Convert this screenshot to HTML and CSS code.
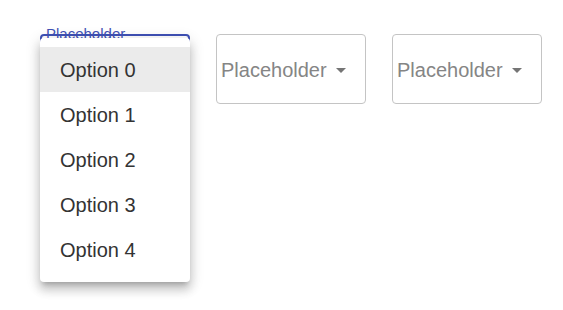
FILE: index.html
```html
<!DOCTYPE html>
<html>
<head>
<meta charset="utf-8">
<link rel="stylesheet" href="styles.css">
</head>
<body>
<div class="row">
  <div class="select focused">
    <span class="label">Placeholder</span>
    <ul class="menu">
      <li class="option active">Option 0</li>
      <li class="option">Option 1</li>
      <li class="option">Option 2</li>
      <li class="option">Option 3</li>
      <li class="option">Option 4</li>
    </ul>
  </div>
  <div class="select">
    <span class="placeholder">Placeholder</span>
    <span class="arrow"></span>
  </div>
  <div class="select">
    <span class="placeholder">Placeholder</span>
    <span class="arrow"></span>
  </div>
</div>
</body>
</html>
```
FILE: styles.css
```css
html, body {
  margin: 0;
  padding: 0;
  background: #ffffff;
  font-family: "Liberation Sans", Arial, sans-serif;
}
body {
  min-height: 310px;
}
.row {
  display: flex;
  gap: 26px;
  padding: 34px 0 0 40px;
  min-height: 276px;
}
.select {
  position: relative;
  box-sizing: border-box;
  width: 150px;
  height: 70px;
  border: 1px solid #c4c4c4;
  border-radius: 4px;
  display: flex;
  align-items: center;
  padding-left: 4px;
}
.select.focused {
  border: 2px solid #3f51b5;
}
.placeholder {
  font-size: 20px;
  color: #858585;
  line-height: 1;
  margin-top: 2px;
}
.arrow {
  width: 0;
  height: 0;
  border-left: 5px solid transparent;
  border-right: 5px solid transparent;
  border-top: 5px solid #757575;
  margin-left: 9px;
  margin-top: 2px;
}
.label {
  position: absolute;
  left: 4px;
  top: -10px;
  font-size: 15px;
  line-height: 15px;
  color: #3f51b5;
}
.menu {
  position: absolute;
  left: -2px;
  top: 2px;
  width: 150px;
  margin: 0;
  padding: 9px 0 10px;
  list-style: none;
  background: #ffffff;
  border-radius: 4px;
  box-shadow: 0 5px 5px -3px rgba(0,0,0,0.2), 0 8px 10px 1px rgba(0,0,0,0.14), 0 3px 14px 2px rgba(0,0,0,0.12);
  z-index: 2;
}
.option {
  box-sizing: border-box;
  height: 45px;
  display: flex;
  align-items: center;
  padding: 2px 0 0 20px;
  font-size: 20px;
  color: #333333;
}
.option.active {
  background: #ebebeb;
}
```
